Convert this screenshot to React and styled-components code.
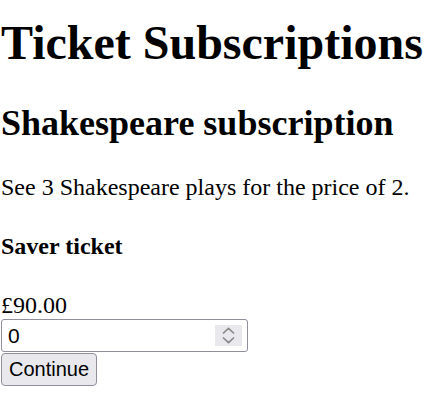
import React, { useState } from "react";
import styled, { createGlobalStyle } from "styled-components";

const GlobalStyle = createGlobalStyle`
  body {
    margin: 0;
    background: #fff;
    color: #000;
    font-family: "Liberation Serif", "Times New Roman", serif;
    font-size: 24px;
  }
`;

const Page = styled.main`
  padding: 15px 1px 0;
`;

const Title = styled.h1`
  font-size: 48px;
  font-weight: bold;
  margin: 0 0 32px;
`;

const Subtitle = styled.h2`
  font-size: 36px;
  font-weight: bold;
  margin: 30px 0;
`;

const Blurb = styled.p`
  margin: 24px 0;
`;

const TicketName = styled.h4`
  font-size: 24px;
  font-weight: bold;
  margin: 32px 0;
`;

const Ticket = styled.div`
  display: flex;
  flex-direction: column;
  align-items: flex-start;
`;

const Price = styled.div``;

const NumberBox = styled.label`
  display: flex;
  align-items: center;
  box-sizing: border-box;
  width: 247px;
  height: 33px;
  border: 1px solid #8f8f9d;
  border-radius: 3px;
  padding: 0 5px 0 6px;
  background: #fff;

  input {
    flex: 1;
    min-width: 0;
    border: none;
    outline: none;
    padding: 0;
    font-family: "Liberation Sans", Arial, sans-serif;
    font-size: 21px;
    color: #000;
    background: transparent;
    -moz-appearance: textfield;
  }

  input::-webkit-inner-spin-button,
  input::-webkit-outer-spin-button {
    -webkit-appearance: none;
    margin: 0;
  }
`;

const Spinner = styled.span`
  display: flex;
  flex-direction: column;
  align-items: center;
  justify-content: center;
  gap: 3px;
  width: 27px;
  height: 21px;
  background: #e9e9ed;
  color: #8a8a8a;
`;

const Button = styled.button`
  box-sizing: border-box;
  height: 33px;
  margin-top: 1px;
  padding: 0 7px;
  border: 1px solid #8f8f9d;
  border-radius: 4px;
  background: #e9e9ed;
  color: #000;
  font-family: "Liberation Sans", Arial, sans-serif;
  font-size: 20px;
  cursor: pointer;
`;

const Chevron = ({ up }) => (
  <svg width="13" height="7" viewBox="0 0 13 7" fill="none">
    <path
      d={up ? "M1.5 6L6.5 1.3L11.5 6" : "M1.5 1L6.5 5.7L11.5 1"}
      stroke="currentColor"
      strokeWidth="1.7"
      strokeLinecap="round"
      strokeLinejoin="round"
    />
  </svg>
);

const App = () => {
  const [qty, setQty] = useState(0);
  return (
    <Page>
      <GlobalStyle />
      <Title>Ticket Subscriptions</Title>
      <Subtitle>Shakespeare subscription</Subtitle>
      <Blurb>See 3 Shakespeare plays for the price of 2.</Blurb>
      <TicketName>Saver ticket</TicketName>
      <Ticket>
        <Price>£90.00</Price>
        <NumberBox>
          <input
            type="number"
            min="0"
            value={qty}
            onChange={(e) => setQty(e.target.value)}
          />
          <Spinner>
            <Chevron up />
            <Chevron />
          </Spinner>
        </NumberBox>
        <Button type="button">Continue</Button>
      </Ticket>
    </Page>
  );
};

export default App;
